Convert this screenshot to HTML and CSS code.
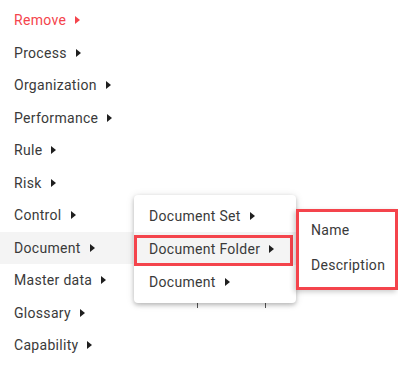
FILE: index.html
```html
<!DOCTYPE html>
<html>
<head>
<meta charset="utf-8">
<link rel="stylesheet" href="styles.css">
</head>
<body>
<div class="page">
  <ul class="menu main">
    <li class="item danger">Remove<span class="caret"></span></li>
    <li class="item">Process<span class="caret"></span></li>
    <li class="item">Organization<span class="caret"></span></li>
    <li class="item">Performance<span class="caret"></span></li>
    <li class="item">Rule<span class="caret"></span></li>
    <li class="item">Risk<span class="caret"></span></li>
    <li class="item">Control<span class="caret"></span></li>
    <li class="item active">Document<span class="caret"></span></li>
    <li class="item">Master data<span class="caret"></span></li>
    <li class="item">Glossary<span class="caret"></span></li>
    <li class="item">Capability<span class="caret"></span></li>
  </ul>

  <div class="ticks"><span class="tick t1"></span><span class="tick t2"></span><span class="tick t3"></span></div>

  <ul class="menu sub">
    <li class="item">Document Set<span class="caret"></span></li>
    <li class="item active marked">Document Folder<span class="caret"></span><span class="mark"></span></li>
    <li class="item">Document<span class="caret"></span></li>
  </ul>

  <ul class="menu third">
    <li class="item">Name</li>
    <li class="item">Description</li>
  </ul>
</div>
</body>
</html>
```

FILE: styles.css
```css
* { box-sizing: border-box; }
html, body { margin: 0; padding: 0; background: #fff; }
body {
  font-family: Roboto, "Liberation Sans", Arial, sans-serif;
  font-size: 14px;
  letter-spacing: 0.3px;
  color: #3a3a3a;
  width: 398px;
  height: 368px;
  overflow: hidden;
}
.page { position: relative; width: 398px; height: 368px; }

.menu { list-style: none; margin: 0; padding: 0; }

.item {
  display: flex;
  align-items: center;
  white-space: nowrap;
}
.caret {
  display: inline-block;
  width: 0; height: 0;
  border-top: 4px solid transparent;
  border-bottom: 4px solid transparent;
  border-left: 5px solid #1f1f1f;
  margin-left: 9px;
}

.main { width: 133px; padding-top: 4px; }
.main .item { height: 32.5px; padding-left: 14px; }
.main .danger { color: #f4444c; }
.main .danger .caret { border-left-color: #f4444c; }
.main .active { background: #f4f4f4; }

.sub {
  position: absolute;
  left: 134px; top: 195px;
  width: 162px;
  padding: 4px 0 5px;
  background: #fff;
  border-radius: 4px;
  box-shadow: 0 2px 4px rgba(0,0,0,0.22), 0 1px 8px rgba(0,0,0,0.12);
}
.sub .item { height: 33px; padding-left: 15px; position: relative; }
.sub .active { background: #f4f4f4; }
.mark {
  position: absolute;
  left: 0; top: 3px;
  width: 159px; height: 31px;
  border: 3px solid #f4444c;
}

.third {
  position: absolute;
  left: 296px; top: 209px;
  width: 102px; height: 81px;
  padding-top: 0;
  background: #fff;
  border: 3px solid #f4444c;
  box-shadow: -2px 2px 5px rgba(0,0,0,0.2);
}
.third .item { height: 35px; padding-left: 12px; }

.ticks { position: absolute; left: 0; top: 303px; width: 398px; height: 8px; }
.tick { position: absolute; top: 0; width: 1px; height: 5px; background: #555; }
.t1 { left: 197px; }
.t2 { left: 265px; }
.t3 { left: 353px; top: -34px; height: 3px; background: #999; }
```
